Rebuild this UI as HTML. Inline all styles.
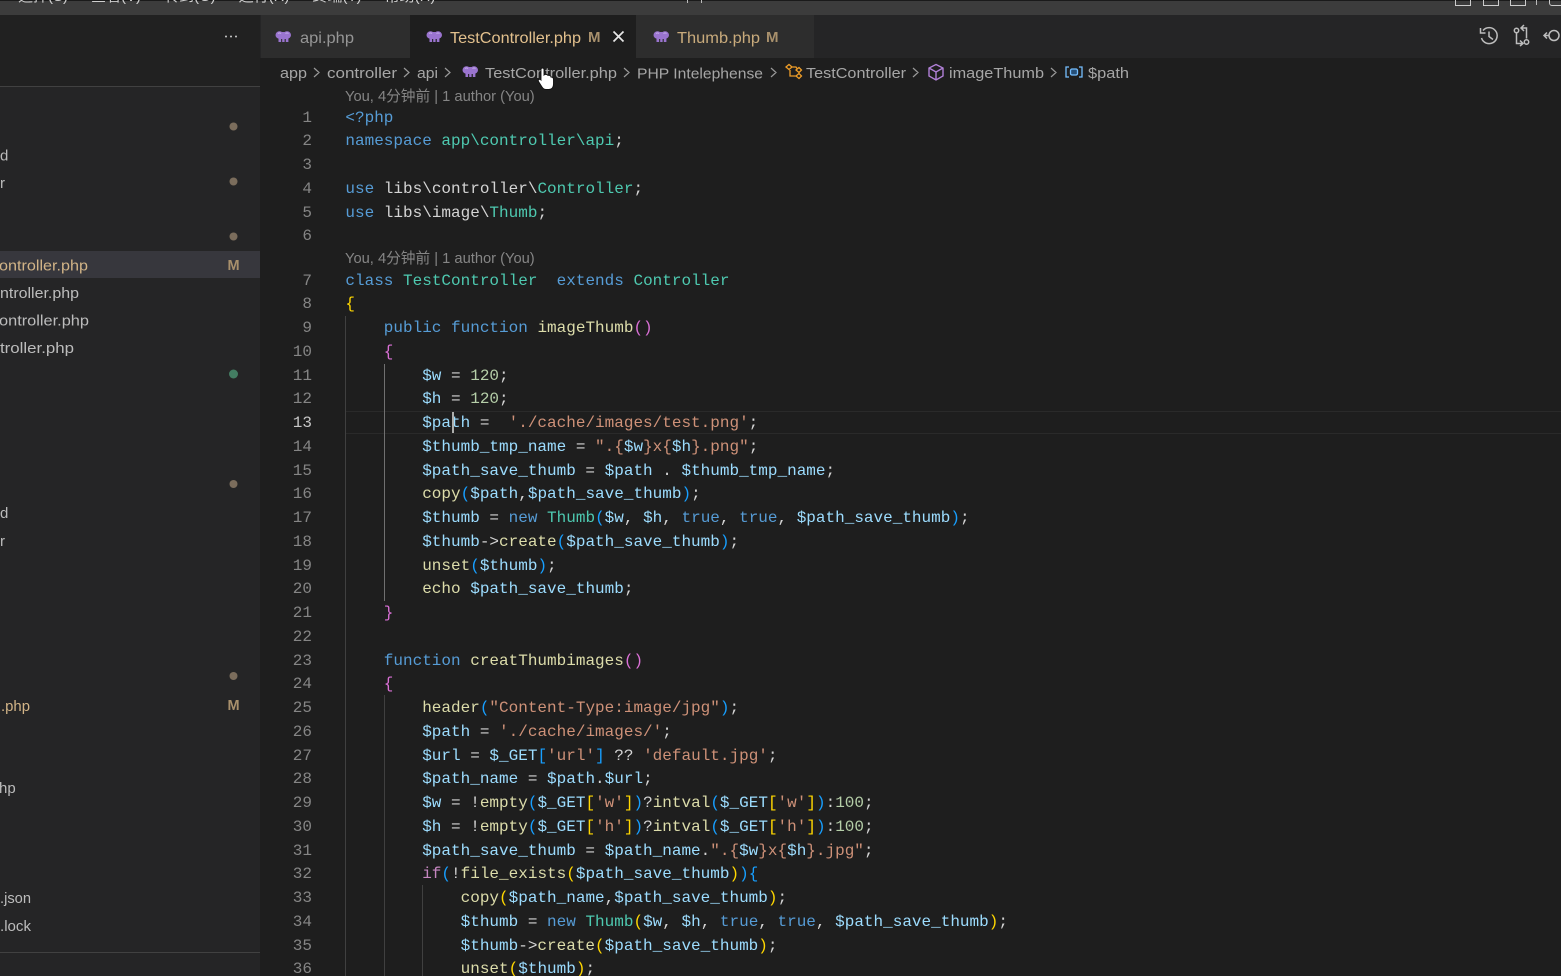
<!DOCTYPE html>
<html><head><meta charset="utf-8"><title>TestController.php</title>
<style>
html,body{margin:0;padding:0;width:1561px;height:976px;overflow:hidden;background:#1e1e1e}
.a{position:absolute}
#wrap{position:absolute;left:0;top:0;width:1561px;height:976px;overflow:hidden}
#code{position:absolute;left:345.4px;top:106.5px;font:16px/23.75px "Liberation Mono",monospace;color:#d4d4d4;z-index:3}
#code div{height:23.75px;white-space:pre}
#nums{position:absolute;left:270px;width:42px;top:106.5px;font:16px/23.75px "Liberation Mono",monospace;color:#858585;text-align:right;z-index:3}
#nums div{height:23.75px}
#nums .lens,#code .lens{height:20.5px;line-height:20.5px}
.k{color:#569cd6}.c{color:#c586c0}.t{color:#4ec9b0}.f{color:#dcdcaa}.v{color:#9cdcfe}.s{color:#ce9178}.n{color:#b5cea8}
.g{color:#ffd700}.p{color:#da70d6}.b{color:#179fff}
svg text{font-family:"Liberation Sans","Noto Sans CJK SC",sans-serif}
</style></head><body><div id="wrap">
<!-- title bar -->
<div class="a" style="left:0;top:0;width:1561px;height:15px;background:#3c3c3c;overflow:hidden;z-index:4">
<div class="a" style="left:0;top:0;width:1561px;height:1px;background:#1a1a1a"></div>
<div class="a" style="left:18px;top:-13px;font:15px/20px 'Liberation Sans','Noto Sans CJK SC',sans-serif;color:#cfcfcf;white-space:pre;word-spacing:3.5px">选择(S)   查看(V)   转到(G)   运行(R)   终端(T)   帮助(H)</div>
<div class="a" style="left:687px;top:0;width:1px;height:3px;background:#bbb"></div>
<div class="a" style="left:701px;top:0;width:1px;height:3px;background:#bbb"></div>
<div class="a" style="left:1455px;top:-6px;width:14px;height:10px;border:1px solid #ccc"></div>
<div class="a" style="left:1483px;top:-6px;width:14px;height:10px;border:1px solid #ccc"></div>
<div class="a" style="left:1510px;top:-6px;width:14px;height:10px;border:1px solid #ccc"></div>
<div class="a" style="left:1536px;top:0;width:1px;height:5px;background:#bbb"></div>
<div class="a" style="left:1549px;top:-6px;width:12px;height:10px;border:1px solid #ccc;border-radius:3px"></div>
</div>
<!-- sidebar -->
<div class="a" style="left:0;top:15px;width:260px;height:71px;background:#212121"></div>
<div class="a" style="left:0;top:86px;width:260px;height:1px;background:#414141"></div>
<div class="a" style="left:0;top:87px;width:260px;height:865px;background:#252526"></div>
<div class="a" style="left:0;top:952px;width:260px;height:1px;background:#414141"></div>
<div class="a" style="left:0;top:953px;width:260px;height:23px;background:#252526"></div>
<div class="a" style="left:0;top:251px;width:260px;height:27px;background:#37373d"></div>
<!-- tab bar -->
<div class="a" style="left:260px;top:15px;width:1301px;height:43px;background:#252526"></div>
<div class="a" style="left:261px;top:15px;width:149px;height:43px;background:#2d2d2d"></div>
<div class="a" style="left:410px;top:15px;width:226px;height:43px;background:#1e1e1e"></div>
<div class="a" style="left:636px;top:15px;width:178px;height:43px;background:#2d2d2d"></div>
<!-- indent guides / current line -->
<div class="a" style="left:345px;top:411px;width:1216px;height:23px;border-top:1px solid #2a2a2a;border-bottom:1px solid #2a2a2a;box-sizing:border-box"></div>
<div class="a" style="left:345px;top:316px;width:1px;height:660px;background:#404040"></div>
<div class="a" style="left:384px;top:364px;width:1px;height:237px;background:#707070"></div>
<div class="a" style="left:384px;top:695px;width:1px;height:281px;background:#404040"></div>
<div class="a" style="left:422px;top:885px;width:1px;height:91px;background:#404040"></div>
<div class="a" style="left:452px;top:412px;width:2px;height:21px;background:#aeafad;z-index:4"></div>

<svg class="a" style="left:0;top:0;z-index:5" width="1561" height="976" viewBox="0 0 1561 976">
<defs>
<g id="el" fill="#9a74cf">
<ellipse cx="4.5" cy="5" rx="4" ry="3.8"/><ellipse cx="12" cy="5" rx="4" ry="3.8"/>
<rect x="5" y="2" width="7" height="7"/>
<rect x="3.5" y="7" width="2.6" height="5"/><rect x="7.2" y="7" width="2.4" height="5"/><rect x="10.800" y="7" width="2.6" height="5"/>
<path d="M3 3.500C4 2.800 5 2.800 6 3.500M10.500 3.500C11.500 2.800 12.500 2.800 13.500 3.500" fill="none" stroke="#c9b3ea" stroke-width=".9"/>
</g>
</defs>
<use href="#el" x="275" y="30"/><use href="#el" x="426" y="30"/><use href="#el" x="653" y="30"/><use href="#el" x="462" y="65"/>
<g font-size="16">
<text x="300" y="43" fill="#969696" textLength="54" lengthAdjust="spacingAndGlyphs">api.php</text>
<text x="450" y="43" fill="#e2c08d" textLength="131" lengthAdjust="spacingAndGlyphs">TestController.php</text>
<text x="588" y="42" fill="#a8906c" font-weight="bold" font-size="15">M</text>
<text x="677" y="43" fill="#c9ab7c" textLength="83" lengthAdjust="spacingAndGlyphs">Thumb.php</text>
<text x="766" y="42" fill="#a8906c" font-weight="bold" font-size="15">M</text>
</g>
<path d="M613.5 31.5 623.5 41.5M623.5 31.5 613.5 41.5" stroke="#e8e8e8" stroke-width="1.7"/>
<circle cx="231" cy="36.5" r="1" fill="#ccc"/><circle cx="226" cy="36.5" r="1" fill="#ccc"/><circle cx="236" cy="36.5" r="1" fill="#ccc"/>
<!-- editor actions -->
<g fill="none" stroke="#bdbdbd" stroke-width="1.5">
<path d="M1483 30.5A8 8 0 1 1 1481.5 38M1480.5 28V33H1485.5M1489 31.5V36.5L1493 39.5"/>
<circle cx="1516.5" cy="30.5" r="2.2"/><circle cx="1526.5" cy="42" r="2.2"/>
<path d="M1516.5 33V44.5H1522M1520 41.5 1523 44.5 1520 47M1526.5 39.500V29H1521M1524 26 1521 29 1524 32" transform="translate(0 -1)"/>
<circle cx="1554" cy="35.5" r="5"/><path d="M1549 35.5H1544M1547 32.5 1544 35.5 1547 38.5"/>
</g>
<!-- breadcrumbs -->
<g font-size="15" fill="#a6a6a6">
<text x="280" y="78" textLength="27" lengthAdjust="spacingAndGlyphs">app</text>
<text x="327" y="78" textLength="70" lengthAdjust="spacingAndGlyphs">controller</text>
<text x="417" y="78" textLength="21" lengthAdjust="spacingAndGlyphs">api</text>
<text x="485" y="78" textLength="132" lengthAdjust="spacingAndGlyphs">TestController.php</text>
<text x="637" y="78.5" textLength="126" lengthAdjust="spacingAndGlyphs">PHP Intelephense</text>
<text x="806" y="78" textLength="100" lengthAdjust="spacingAndGlyphs">TestController</text>
<text x="949" y="78" textLength="95" lengthAdjust="spacingAndGlyphs">imageThumb</text>
<text x="1088" y="78" textLength="41" lengthAdjust="spacingAndGlyphs">$path</text>
</g>
<g fill="none" stroke="#9a9a9a" stroke-width="1.2">
<path d="M314 68 319 72.5 314 77M404 68 409 72.5 404 77M445 68 450 72.5 445 77M624 68 629 72.5 624 77M771 68 776 72.5 771 77M913 68 918 72.5 913 77M1051 68 1056 72.5 1051 77"/>
</g>
<g fill="none" stroke="#ee9d28" stroke-width="1.3">
<path d="M786 67 789 64.500 792 67 789 69.500ZM796 70 799 67.5 801.5 70 799 72.500ZM796 76 799 73.500 801.5 76 799 78.500ZM792 67H796L797 68.500M790 70V76H796"/>
</g>
<g fill="none" stroke="#b180d7" stroke-width="1.4">
<path d="M936 64.5 943 68V76L936 80 929 76V68ZM929 68 936 72 943 68M936 72V80"/>
</g>
<g fill="none" stroke="#75beff" stroke-width="1.3">
<path d="M1069 67H1066V77H1069M1079 67H1082V77H1079"/>
<rect x="1070.5" y="69" width="7" height="6" rx="1.5" fill="#264f78"/>
</g>
<!-- sidebar text -->
<g font-size="15" fill="#bcbcbc">
<text x="0" y="160.5">d</text>
<text x="0" y="188">r</text>
<text x="-1" y="270.5" fill="#d2b487" textLength="89" lengthAdjust="spacingAndGlyphs">ontroller.php</text>
<text x="0" y="298" textLength="79" lengthAdjust="spacingAndGlyphs">ntroller.php</text>
<text x="-1" y="325.5" textLength="90" lengthAdjust="spacingAndGlyphs">ontroller.php</text>
<text x="0" y="353" textLength="74" lengthAdjust="spacingAndGlyphs">troller.php</text>
<text x="0" y="518">d</text>
<text x="0" y="546">r</text>
<text x="1" y="711" fill="#d2b487" textLength="29" lengthAdjust="spacingAndGlyphs">.php</text>
<text x="-1" y="793">hp</text>
<text x="0" y="903" textLength="31" lengthAdjust="spacingAndGlyphs">.json</text>
<text x="0" y="931" textLength="31" lengthAdjust="spacingAndGlyphs">.lock</text>
</g>
<g fill="#7b6d5c">
<circle cx="233.5" cy="126.5" r="4"/><circle cx="233.5" cy="181.5" r="4"/><circle cx="233.5" cy="236.5" r="4"/><circle cx="233.5" cy="484" r="4"/><circle cx="233.5" cy="676" r="4"/>
</g>
<circle cx="233.5" cy="374" r="4.5" fill="#437d62"/>
<g font-size="14.5" font-weight="bold" fill="#a8906c" text-anchor="middle">
<text x="233.5" y="270">M</text><text x="233.5" y="710">M</text>
</g>
<!-- hand cursor -->
<path d="M541 69.5C541 67.5 544 67.5 544 69.5V75C545 74 548 74.5 548 75.5 549.5 75 551 76 551 77 552.5 77 553.5 78 553.5 79.5V84C553.5 87 552 89.5 549 89.5H546C544 89.5 543 88.5 542 87L538.5 81.5C537.5 80 539.5 78.5 541 80Z" fill="#fff" stroke="#111" stroke-width=".9"/>
</svg>

<div id="nums">
<div>1</div><div>2</div><div>3</div><div>4</div><div>5</div><div>6</div><div class="lens"></div>
<div>7</div><div>8</div><div>9</div><div>10</div><div>11</div><div>12</div><div style="color:#c6c6c6">13</div><div>14</div><div>15</div><div>16</div><div>17</div><div>18</div><div>19</div><div>20</div><div>21</div><div>22</div><div>23</div><div>24</div><div>25</div><div>26</div><div>27</div><div>28</div><div>29</div><div>30</div><div>31</div><div>32</div><div>33</div><div>34</div><div>35</div><div>36</div>
</div>

<div class="a" style="left:345px;top:86.5px;font:14.7px/20px 'Liberation Sans','Noto Sans CJK SC',sans-serif;color:#858585;z-index:3">You, 4分钟前 | 1 author (You)</div>

<div id="code"><div><span class="k">&lt;?php</span></div><div><span class="k">namespace</span> <span class="t">app\controller\api</span>;</div><div></div><div><span class="k">use</span> libs\controller\<span class="t">Controller</span>;</div><div><span class="k">use</span> libs\image\<span class="t">Thumb</span>;</div><div></div><div class="lens" style="font:14.7px/20.5px 'Liberation Sans','Noto Sans CJK SC',sans-serif;color:#858585;margin-left:-.4px">You, 4分钟前 | 1 author (You)</div><div><span class="k">class</span> <span class="t">TestController</span>  <span class="k">extends</span> <span class="t">Controller</span></div><div><span class="g">{</span></div><div>    <span class="k">public</span> <span class="k">function</span> <span class="f">imageThumb</span><span class="p">()</span></div><div>    <span class="p">{</span></div><div>        <span class="v">$w</span> = <span class="n">120</span>;</div><div>        <span class="v">$h</span> = <span class="n">120</span>;</div><div>        <span class="v">$path</span> =  <span class="s">'./cache/images/test.png'</span>;</div><div>        <span class="v">$thumb_tmp_name</span> = <span class="s">".{</span><span class="v">$w</span><span class="s">}x{</span><span class="v">$h</span><span class="s">}.png"</span>;</div><div>        <span class="v">$path_save_thumb</span> = <span class="v">$path</span> . <span class="v">$thumb_tmp_name</span>;</div><div>        <span class="f">copy</span><span class="b">(</span><span class="v">$path</span>,<span class="v">$path_save_thumb</span><span class="b">)</span>;</div><div>        <span class="v">$thumb</span> = <span class="k">new</span> <span class="t">Thumb</span><span class="b">(</span><span class="v">$w</span>, <span class="v">$h</span>, <span class="k">true</span>, <span class="k">true</span>, <span class="v">$path_save_thumb</span><span class="b">)</span>;</div><div>        <span class="v">$thumb</span>-&gt;<span class="f">create</span><span class="b">(</span><span class="v">$path_save_thumb</span><span class="b">)</span>;</div><div>        <span class="f">unset</span><span class="b">(</span><span class="v">$thumb</span><span class="b">)</span>;</div><div>        <span class="f">echo</span> <span class="v">$path_save_thumb</span>;</div><div>    <span class="p">}</span></div><div></div><div>    <span class="k">function</span> <span class="f">creatThumbimages</span><span class="p">()</span></div><div>    <span class="p">{</span></div><div>        <span class="f">header</span><span class="b">(</span><span class="s">"Content-Type:image/jpg"</span><span class="b">)</span>;</div><div>        <span class="v">$path</span> = <span class="s">'./cache/images/'</span>;</div><div>        <span class="v">$url</span> = <span class="v">$_GET</span><span class="b">[</span><span class="s">'url'</span><span class="b">]</span> ?? <span class="s">'default.jpg'</span>;</div><div>        <span class="v">$path_name</span> = <span class="v">$path</span>.<span class="v">$url</span>;</div><div>        <span class="v">$w</span> = !<span class="f">empty</span><span class="b">(</span><span class="v">$_GET</span><span class="g">[</span><span class="s">'w'</span><span class="g">]</span><span class="b">)</span>?<span class="f">intval</span><span class="b">(</span><span class="v">$_GET</span><span class="g">[</span><span class="s">'w'</span><span class="g">]</span><span class="b">)</span>:<span class="n">100</span>;</div><div>        <span class="v">$h</span> = !<span class="f">empty</span><span class="b">(</span><span class="v">$_GET</span><span class="g">[</span><span class="s">'h'</span><span class="g">]</span><span class="b">)</span>?<span class="f">intval</span><span class="b">(</span><span class="v">$_GET</span><span class="g">[</span><span class="s">'h'</span><span class="g">]</span><span class="b">)</span>:<span class="n">100</span>;</div><div>        <span class="v">$path_save_thumb</span> = <span class="v">$path_name</span>.<span class="s">".{</span><span class="v">$w</span><span class="s">}x{</span><span class="v">$h</span><span class="s">}.jpg"</span>;</div><div>        <span class="c">if</span><span class="b">(</span>!<span class="f">file_exists</span><span class="g">(</span><span class="v">$path_save_thumb</span><span class="g">)</span><span class="b">){</span></div><div>            <span class="f">copy</span><span class="g">(</span><span class="v">$path_name</span>,<span class="v">$path_save_thumb</span><span class="g">)</span>;</div><div>            <span class="v">$thumb</span> = <span class="k">new</span> <span class="t">Thumb</span><span class="g">(</span><span class="v">$w</span>, <span class="v">$h</span>, <span class="k">true</span>, <span class="k">true</span>, <span class="v">$path_save_thumb</span><span class="g">)</span>;</div><div>            <span class="v">$thumb</span>-&gt;<span class="f">create</span><span class="g">(</span><span class="v">$path_save_thumb</span><span class="g">)</span>;</div><div>            <span class="f">unset</span><span class="g">(</span><span class="v">$thumb</span><span class="g">)</span>;</div></div>
</div></body></html>
